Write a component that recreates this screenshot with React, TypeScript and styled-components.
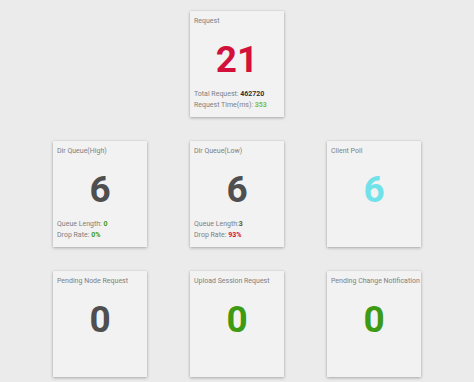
import React from 'react';
import styled, { createGlobalStyle } from 'styled-components';

const GlobalStyle = createGlobalStyle`
  html, body {
    margin: 0;
    padding: 0;
    background: #ebebeb;
    font-family: Roboto, "Liberation Sans", Arial, sans-serif;
    -webkit-font-smoothing: antialiased;
  }
`;

const Page = styled.div`
  width: 474px;
  height: 382px;
  padding-top: 11px;
  box-sizing: border-box;
  display: flex;
  justify-content: center;
`;

const Grid = styled.div`
  display: grid;
  grid-template-columns: repeat(3, 94px);
  grid-auto-rows: 106px;
  column-gap: 43px;
  row-gap: 24px;
`;

const Card = styled.div<{ $col?: number }>`
  grid-column: ${(p) => (p.$col ? `${p.$col}` : 'auto')};
  background: #f2f2f2;
  box-shadow: 0 1px 3px rgba(0, 0, 0, 0.28), 0 0 1px rgba(0, 0, 0, 0.12);
  padding: 6px 4px 7px 4px;
  box-sizing: border-box;
  display: flex;
  flex-direction: column;
`;

const Title = styled.div`
  font-size: 7px;
  color: #808080;
  line-height: 9px;
  white-space: nowrap;
`;

const Value = styled.div<{ $color: string }>`
  flex: 1;
  display: flex;
  align-items: center;
  justify-content: center;
  padding-top: 6px;
  font-size: 37px;
  font-weight: 700;
  color: ${(p) => p.$color};
`;

const Footer = styled.div`
  height: 24px;
  display: flex;
  flex-direction: column;
  justify-content: flex-end;
  gap: 2px;
`;

const Line = styled.div`
  font-size: 7px;
  line-height: 9px;
  color: #808080;
  white-space: nowrap;
`;

const Num = styled.span<{ $color: string }>`
  font-weight: 700;
  color: ${(p) => p.$color};
`;

const RED = '#d3103a';
const GRAY = '#4f4f4f';
const CYAN = '#72e2ea';
const GREEN = '#3d9a12';

type Stat = { label: string; value: string; color: string };

type CardData = {
  title: string;
  value: string;
  color: string;
  col?: number;
  stats?: Stat[];
};

const cards: CardData[] = [
  {
    title: 'Request',
    value: '21',
    color: RED,
    col: 2,
    stats: [
      { label: 'Total Request: ', value: '462720', color: '#333' },
      { label: 'Request Time(ms): ', value: '353', color: '#7cbf4a' },
    ],
  },
  {
    title: 'Dir Queue(High)',
    value: '6',
    color: GRAY,
    col: 1,
    stats: [
      { label: 'Queue Length: ', value: '0', color: GREEN },
      { label: 'Drop Rate: ', value: '0%', color: GREEN },
    ],
  },
  {
    title: 'Dir Queue(Low)',
    value: '6',
    color: GRAY,
    stats: [
      { label: 'Queue Length:', value: '3', color: '#5a5a2a' },
      { label: 'Drop Rate: ', value: '93%', color: RED },
    ],
  },
  { title: 'Client Poll', value: '6', color: CYAN },
  { title: 'Pending Node Request', value: '0', color: GRAY },
  { title: 'Upload Session Request', value: '0', color: GREEN },
  { title: 'Pending Change Notification', value: '0', color: GREEN },
];

export default function App() {
  return (
    <>
      <GlobalStyle />
      <Page>
        <Grid>
          {cards.map((c, i) => (
            <Card key={i} $col={c.col}>
              <Title>{c.title}</Title>
              <Value $color={c.color}>{c.value}</Value>
              <Footer>
                {c.stats?.map((s, j) => (
                  <Line key={j}>
                    {s.label}
                    <Num $color={s.color}>{s.value}</Num>
                  </Line>
                ))}
              </Footer>
            </Card>
          ))}
        </Grid>
      </Page>
    </>
  );
}
